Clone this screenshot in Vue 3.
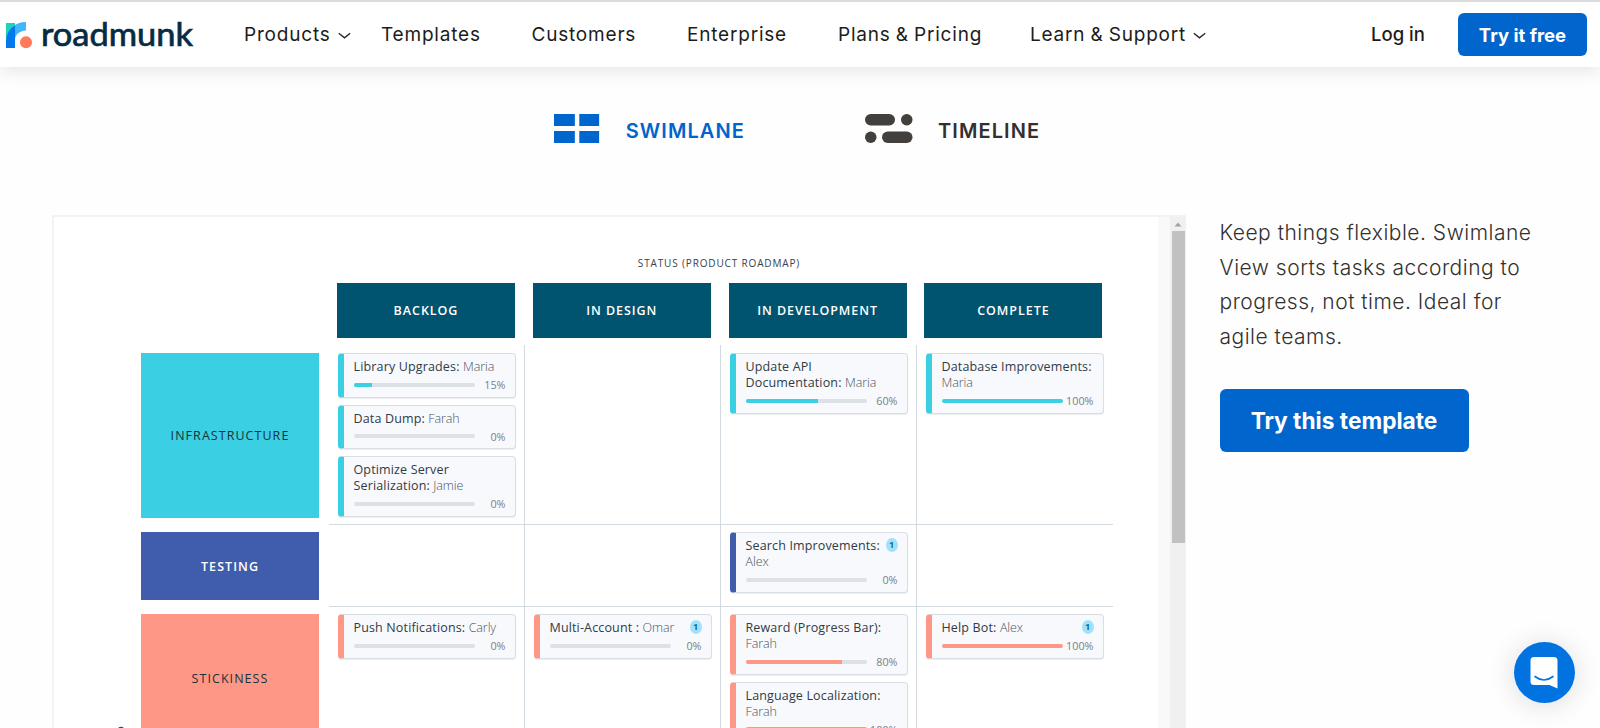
<script setup>
const navItems = [
    { label: 'Products', menu: true },
    { label: 'Templates' },
    { label: 'Customers' },
    { label: 'Enterprise' },
    { label: 'Plans & Pricing' },
    { label: 'Learn & Support', menu: true },
];

const columns = ['Backlog', 'In design', 'In development', 'Complete'];

const lanes = [
    {
        name: 'Infrastructure',
        theme: 'cyan',
        cells: [
            [
                { title: 'Library Upgrades:', owner: 'Maria', progress: 15 },
                { title: 'Data Dump:', owner: 'Farah', progress: 0 },
                { title: 'Optimize Server Serialization:', owner: 'Jamie', progress: 0 },
            ],
            [],
            [{ title: 'Update API Documentation:', owner: 'Maria', progress: 60 }],
            [{ title: 'Database Improvements:', owner: 'Maria', progress: 100 }],
        ],
    },
    {
        name: 'Testing',
        theme: 'blue',
        cells: [
            [],
            [],
            [{ title: 'Search Improvements:', owner: 'Alex', progress: 0, links: 1 }],
            [],
        ],
    },
    {
        name: 'Stickiness',
        theme: 'coral',
        cells: [
            [{ title: 'Push Notifications:', owner: 'Carly', progress: 0 }],
            [{ title: 'Multi-Account :', owner: 'Omar', progress: 0, links: 1 }],
            [
                { title: 'Reward (Progress Bar):', owner: 'Farah', progress: 80 },
                { title: 'Language Localization:', owner: 'Farah', progress: 100 },
            ],
            [{ title: 'Help Bot:', owner: 'Alex', progress: 100, links: 1 }],
        ],
    },
];
</script>

<template>
    <div class="page">
        <header class="topbar">
            <a class="brand">
                <svg class="brand-mark" width="27" height="27" viewBox="0 0 27 27">
                    <path d="M0 1H9V16H0Z" fill="#20d3b8" />
                    <path d="M20 0V8.500C13 9 9 13 9 18V26H0V20C0 8 8 0 20 0Z" fill="#41b6fb" />
                    <path d="M0 26V20C0 12.500 3 7 9 3.500V26Z" fill="#0078ee" />
                    <circle cx="20" cy="20.300" r="6" fill="#ff7a5a" />
                </svg>
                <svg class="brand-name" width="156" height="40" viewBox="0 0 156 40">
                    <text x="0" y="30.500" textLength="152" lengthAdjust="spacingAndGlyphs">roadmunk</text>
                </svg>
            </a>
            <nav class="nav">
                <a v-for="item in navItems" :key="item.label" class="nav-link">
                    {{ item.label }}
                    <svg v-if="item.menu" class="chevron" width="13" height="8" viewBox="0 0 13 8">
                        <path d="M.8 1.200 6.500 5.800 12.200 1.200" fill="none" stroke="#222" stroke-width="1.300" />
                    </svg>
                </a>
            </nav>
            <a class="login">Log in</a>
            <button class="btn btn--small">Try it free</button>
        </header>

        <div class="tabs">
            <button class="tab tab--active">
                <svg width="46" height="29" viewBox="0 0 46 29" fill="currentColor">
                    <path d="M0 0H21V12H0ZM25.500 0H45.500V12H25.500ZM0 17H21V29H0ZM25.500 17H45.500V29H25.500Z" />
                </svg>
                <span>SWIMLANE</span>
            </button>
            <button class="tab">
                <svg width="48" height="29" viewBox="0 0 48 29" fill="#423f3c">
                    <rect width="30" height="11.500" rx="5.700" />
                    <rect x="36" width="11.500" height="11.500" rx="5.700" />
                    <rect y="17.500" width="11.500" height="11.500" rx="5.700" />
                    <rect x="17" y="17.500" width="30.500" height="11.500" rx="5.700" />
                </svg>
                <span>TIMELINE</span>
            </button>
        </div>

        <main class="content">
            <section class="viewer">
                <div class="roadmap">
                    <p class="axis-title">STATUS (PRODUCT ROADMAP)</p>
                    <div class="column-heads">
                        <div v-for="column in columns" :key="column" class="column-head">{{ column }}</div>
                    </div>
                    <div v-for="lane in lanes" :key="lane.name" :class="['lane', `lane--${lane.theme}`]">
                        <div class="lane-label">{{ lane.name }}</div>
                        <div class="lane-cells">
                            <div v-for="(cards, index) in lane.cells" :key="index" class="cell">
                                <article v-for="card in cards" :key="card.title" class="card">
                                    <div class="card-top">
                                        <p class="card-title">
                                            {{ card.title }} <span class="owner">{{ card.owner }}</span>
                                        </p>
                                        <span v-if="card.links" class="badge">{{ card.links }}</span>
                                    </div>
                                    <div class="card-progress">
                                        <div class="track">
                                            <div class="fill" :style="{ width: `${card.progress}%` }"></div>
                                        </div>
                                        <span class="percent">{{ card.progress }}%</span>
                                    </div>
                                </article>
                            </div>
                        </div>
                    </div>
                    <svg class="side-mark" width="8" height="2" viewBox="0 0 8 2">
                        <path d="M1 2Q4 -.5 7 2" fill="#40484e" />
                    </svg>
                </div>
                <div class="gutter"></div>
                <div class="scrollbar">
                    <svg class="scroll-arrow" width="8" height="5" viewBox="0 0 8 5">
                        <path d="M4 .5 7.500 4.500H.5Z" fill="#a3a3a3" />
                    </svg>
                    <div class="thumb"></div>
                </div>
            </section>

            <aside class="intro">
                <p class="intro-text">
                    Keep things flexible. Swimlane<br />
                    View sorts tasks according to<br />
                    progress, not time. Ideal for<br />
                    agile teams.
                </p>
                <button class="btn btn--large">Try this template</button>
            </aside>
        </main>

        <button class="chat">
            <svg width="28" height="32" viewBox="0 0 28 32">
                <path d="M4 0H24Q27.500 0 27.500 3.500V31.500L19.500 28H4Q.5 28 .5 24.500V3.500Q.5 0 4 0Z" fill="#fff" />
                <path d="M5 19.500Q14 26.500 23 19.500" fill="none" stroke="#0073e0" stroke-width="1.600" stroke-linecap="round" />
            </svg>
        </button>
    </div>
</template>

<style>
body {
    overflow: hidden;
    background: #fff;
}
</style>

<style scoped>
* {
    box-sizing: border-box;
}

p {
    margin: 0;
}

button {
    padding: 0;
    border: 0;
    font-family: inherit;
    cursor: pointer;
}

.page {
    position: relative;
    display: flex;
    flex-direction: column;
    width: 1600px;
    height: 728px;
    overflow: hidden;
    color: #1d1c1b;
    background: #fefefe;
    font-family: Inter, sans-serif;
}

.topbar {
    display: flex;
    flex: none;
    align-items: center;
    height: 67px;
    padding: 0 13px 0 6px;
    background: #fff;
    border-top: 2px solid #dcdcdc;
    box-shadow: 0 3px 18px rgba(0, 0, 0, 0.11);
}

.brand {
    display: flex;
    gap: 8px;
    align-items: center;
    width: 238px;
}

.brand-mark {
    position: relative;
    top: 1px;
}

.brand-name {
    overflow: visible;
    fill: #062c44;
    font-family: Lato, sans-serif;
    font-size: 32px;
    font-weight: 400;
    stroke: #062c44;
    stroke-width: 0.7;
}

.nav {
    display: grid;
    flex: 1;
    grid-template-columns: 137px 150.5px 155.5px 151px 192px 1fr;
    font-size: 19px;
    letter-spacing: 0.8px;
    word-spacing: -1px;
    white-space: nowrap;
}

.chevron {
    margin-left: 2px;
    vertical-align: 1px;
}

.login {
    width: 87px;
    margin-top: -1px;
    font-size: 18.5px;
    font-weight: 500;
}

.btn {
    color: #fff;
    background: #0065cc;
    border-radius: 6px;
    font-weight: 700;
}

.btn--small {
    width: 129px;
    height: 43px;
    font-size: 18.5px;
}

.btn--large {
    width: 249px;
    height: 63px;
    font-size: 22.7px;
}

.tabs {
    display: flex;
    flex: none;
    gap: 120px;
    height: 148px;
    padding: 47px 0 0 554px;
}

.tab {
    display: flex;
    align-items: flex-start;
    height: 40px;
    color: #33302e;
    background: none;
    font-size: 20px;
    font-weight: 600;
    letter-spacing: 1.1px;
}

.tab span {
    padding: 5px 0 0 25px;
}

.tab--active {
    width: 191px;
    color: #0065cc;
}

.tab--active span {
    padding-left: 26px;
}

.content {
    display: flex;
    flex: 1;
    gap: 33.5px;
    min-height: 0;
    padding-left: 52px;
}

.viewer {
    display: flex;
    width: 1134px;
    overflow: hidden;
    border-top: 2px solid #f3f3f3;
    border-left: 2px solid #f3f3f3;
}

.roadmap {
    position: relative;
    flex: none;
    width: 1104px;
    padding: 39px 0 0 87px;
    background: #fff;
    font-family: "Open Sans", sans-serif;
}

.axis-title {
    width: 784px;
    margin-left: 186px;
    color: #36424d;
    font-size: 10px;
    font-weight: 500;
    line-height: 14px;
    letter-spacing: 0.85px;
    text-align: center;
}

.column-heads {
    display: grid;
    grid-template-columns: repeat(4, 178px);
    gap: 17.8px;
    margin: 13px 0 7px 196px;
}

.column-head,
.lane-label {
    display: flex;
    align-items: center;
    justify-content: center;
    font-size: 12.5px;
    font-weight: 600;
    letter-spacing: 0.95px;
    text-transform: uppercase;
}

.column-head {
    height: 55px;
    color: #fff;
    background: #00546f;
}

.lane {
    display: flex;
    gap: 10px;
}

.lane-label {
    width: 178px;
    margin: 7px 0;
    color: #17323b;
    background: var(--lane);
    font-weight: 500;
    letter-spacing: 1.05px;
}

.lane--cyan {
    --lane: #3acfe3;
    height: 180px;
}

.lane--cyan .lane-label {
    margin-top: 8px;
}

.lane--blue {
    --lane: #405cad;
    height: 82px;
}

.lane--blue .lane-label {
    color: #fff;
    font-weight: 600;
}

.lane--coral {
    --lane: #ff9786;
    height: 142px;
}

.lane-cells {
    display: grid;
    grid-template-columns: repeat(4, 196px);
    border-bottom: 1px solid #d3dae0;
}

.cell {
    display: flex;
    flex-direction: column;
    gap: 7px;
    padding: 7px 0 0 9px;
    border-right: 1px solid #d3dae0;
}

.lane--cyan .cell {
    padding-top: 8px;
}

.cell:last-child {
    border-right: 0;
}

.card {
    width: 178px;
    padding: 5px 9.5px 4.5px 9.5px;
    background: #f8f9fc;
    border: 1px solid #d8dee3;
    border-left: 6px solid var(--lane);
    border-radius: 4px;
    box-shadow: 0 1px 1px rgba(60, 80, 100, 0.1);
}

.card-top {
    display: flex;
    justify-content: space-between;
}

.card-title {
    color: #303b45;
    font-size: 12.5px;
    line-height: 16px;
    letter-spacing: 0.15px;
}

.owner {
    color: #4b545c;
    font-weight: 300;
    letter-spacing: -0.1px;
}

.badge {
    flex: none;
    width: 12px;
    height: 14px;
    color: #0072a3;
    background: #a3e1fb;
    border-radius: 50%;
    font-size: 9px;
    font-weight: 700;
    line-height: 14px;
    text-align: center;
}

.card-progress {
    display: flex;
    align-items: center;
    justify-content: space-between;
    height: 17px;
    padding-top: 2px;
}

.track {
    width: 121px;
    height: 4px;
    overflow: hidden;
    background: #dce1e6;
    border-radius: 2px;
}

.fill {
    height: 4px;
    background: var(--lane);
}

.percent {
    color: #76818b;
    font-size: 10.8px;
}

.side-mark {
    position: absolute;
    top: 509px;
    left: 63px;
}

.gutter {
    width: 12px;
    background: #f9f9f9;
}

.scrollbar {
    display: flex;
    flex-direction: column;
    align-items: center;
    width: 16px;
    margin-top: -2px;
    background: #f0f0f0;
}

.scroll-arrow {
    margin: 7px 0 4px;
}

.thumb {
    width: 13px;
    height: 312px;
    background: #c1c1c1;
}

.intro-text {
    margin: 1px 0 34px;
    color: #33302e;
    font-size: 21px;
    font-weight: 300;
    line-height: 34.7px;
    letter-spacing: 0.5px;
    white-space: nowrap;
}

.chat {
    position: absolute;
    top: 642px;
    left: 1513.5px;
    display: flex;
    align-items: center;
    justify-content: center;
    width: 61px;
    height: 61px;
    background: #0073e0;
    border-radius: 50%;
    box-shadow: 0 2px 28px rgba(0, 0, 0, 0.14);
}
</style>
